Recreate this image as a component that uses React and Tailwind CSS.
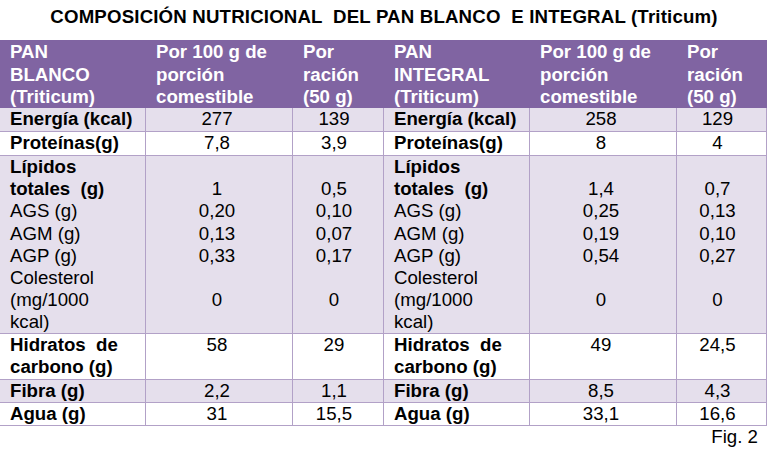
const FONT = "font-['Liberation_Sans',Arial,sans-serif]"

const HEAD = [
  { lines: ['PAN', 'BLANCO', '(Triticum)'] },
  { lines: ['Por 100 g de', 'porción', 'comestible'] },
  { lines: ['Por', 'ración', '(50 g)'] },
  { lines: ['PAN', 'INTEGRAL', '(Triticum)'] },
  { lines: ['Por 100 g de', 'porción', 'comestible'] },
  { lines: ['Por', 'ración', '(50 g)'] },
]

const ROWS = [
  {
    h: 'h-[24px]',
    band: true,
    label: [{ t: 'Energía (kcal)', b: true }],
    left: [['277'], ['139']],
    right: [['258'], ['129']],
  },
  {
    h: 'h-[24px]',
    band: false,
    label: [{ t: 'Proteínas(g)', b: true }],
    left: [['7,8'], ['3,9']],
    right: [['8'], ['4']],
  },
  {
    h: 'h-[178px]',
    band: true,
    label: [
      { t: 'Lípidos', b: true },
      { t: 'totales  (g)', b: true },
      { t: 'AGS (g)' },
      { t: 'AGM (g)' },
      { t: 'AGP (g)' },
      { t: 'Colesterol' },
      { t: '(mg/1000' },
      { t: 'kcal)' },
    ],
    left: [
      ['', '1', '0,20', '0,13', '0,33', '', '0', ''],
      ['', '0,5', '0,10', '0,07', '0,17', '', '0', ''],
    ],
    right: [
      ['', '1,4', '0,25', '0,19', '0,54', '', '0', ''],
      ['', '0,7', '0,13', '0,10', '0,27', '', '0', ''],
    ],
  },
  {
    h: 'h-[46px]',
    band: false,
    label: [{ t: 'Hidratos  de', b: true }, { t: 'carbono (g)', b: true }],
    left: [['58'], ['29']],
    right: [['49'], ['24,5']],
  },
  {
    h: 'h-[23px]',
    band: true,
    label: [{ t: 'Fibra (g)', b: true }],
    left: [['2,2'], ['1,1']],
    right: [['8,5'], ['4,3']],
  },
  {
    h: 'h-[23px]',
    band: false,
    label: [{ t: 'Agua (g)', b: true }],
    left: [['31'], ['15,5']],
    right: [['33,1'], ['16,6']],
  },
]

function Lines({ items }) {
  return items.map((it, i) => (
    <div key={i} className={`h-[22.2px] whitespace-pre ${it.b ? 'font-bold' : ''}`}>
      {it.t}
    </div>
  ))
}

function Values({ items }) {
  return items.map((v, i) => (
    <div key={i} className="h-[22.2px]">{v}</div>
  ))
}

function Row({ row }) {
  const bg = row.band ? 'bg-[#e5dfec]' : 'bg-white'
  const cell = 'border-r border-[#b2a1c7] leading-[22.2px]'
  return (
    <div className={`grid grid-cols-[146px_147px_91px_146px_147px_90px] border-b border-[#b2a1c7] ${row.h} ${bg}`}>
      <div className={`${cell} pl-[10px]`}><Lines items={row.label} /></div>
      <div className={`${cell} text-center pl-[6px] pr-[10px]`}><Values items={row.left[0]} /></div>
      <div className={`${cell} text-center pl-[2px] pr-[10px]`}><Values items={row.left[1]} /></div>
      <div className={`${cell} pl-[10px]`}><Lines items={row.label} /></div>
      <div className={`${cell} text-center pl-[6px] pr-[10px]`}><Values items={row.right[0]} /></div>
      <div className={`${cell} text-center pl-[2px] pr-[10px]`}><Values items={row.right[1]} /></div>
    </div>
  )
}

export default function App() {
  return (
    <div className={`w-[768px] h-[454px] bg-white text-black text-[18.67px] ${FONT}`}>
      <div className="h-[40px] pt-[6px] text-center font-bold leading-[22.3px] tracking-[0.17px] whitespace-pre">
        {'COMPOSICIÓN NUTRICIONAL  DEL PAN BLANCO  E INTEGRAL (Triticum)'}
      </div>

      <div className="w-[767px]">
        <div className="grid grid-cols-[146px_147px_91px_146px_147px_90px] h-[68px] bg-[#8064a2] text-white font-bold leading-[22.5px] pt-[1px]">
          {HEAD.map((h, i) => (
            <div key={i} className="pl-[10px] whitespace-nowrap">
              {h.lines.map((l, j) => <div key={j}>{l}</div>)}
            </div>
          ))}
        </div>
        {ROWS.map((r, i) => <Row key={i} row={r} />)}
      </div>

      <div className="text-right pr-[10px] leading-[22.3px]">Fig. 2</div>
    </div>
  )
}
